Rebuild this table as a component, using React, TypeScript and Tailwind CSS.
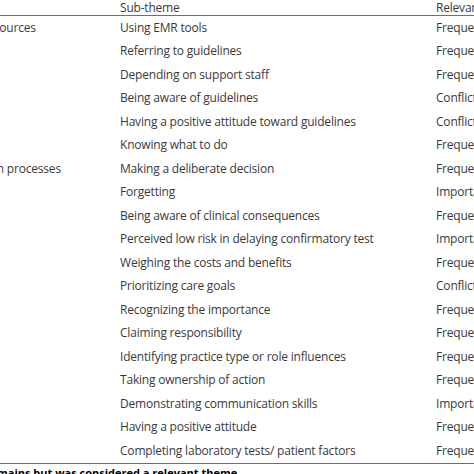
const rows: [string, string, string][] = [
  ["Resources", "Using EMR tools", "Frequent"],
  ["", "Referring to guidelines", "Frequent"],
  ["", "Depending on support staff", "Frequent"],
  ["", "Being aware of guidelines", "Conflicting"],
  ["", "Having a positive attitude toward guidelines", "Conflicting"],
  ["", "Knowing what to do", "Frequent"],
  ["Decision processes", "Making a deliberate decision", "Frequent"],
  ["", "Forgetting", "Important"],
  ["", "Being aware of clinical consequences", "Frequent"],
  ["", "Perceived low risk in delaying confirmatory test", "Important"],
  ["", "Weighing the costs and benefits", "Frequent"],
  ["", "Prioritizing care goals", "Conflicting"],
  ["", "Recognizing the importance", "Frequent"],
  ["", "Claiming responsibility", "Frequent"],
  ["", "Identifying practice type or role influences", "Frequent"],
  ["", "Taking ownership of action", "Frequent"],
  ["", "Demonstrating communication skills", "Important"],
  ["", "Having a positive attitude", "Frequent"],
  ["", "Completing laboratory tests/ patient factors", "Frequent"],
];

export default function App() {
  return (
    <div
      className="w-[474px] h-[474px] overflow-hidden bg-white text-[#3a3a3a] text-[12px] tracking-[-0.2px]"
      style={{ fontFamily: '"Open Sans", "Noto Sans", sans-serif' }}
    >
      <div className="flex h-[16px] items-center border-b border-[#6f6f6f] leading-none">
        <div className="w-[120px] shrink-0" />
        <div className="w-[316px] shrink-0 whitespace-nowrap">Sub-theme</div>
        <div className="whitespace-nowrap">Relevance</div>
      </div>
      {rows.map(([theme, sub, rel], i) => (
        <div key={i} className="flex h-[23.5px] items-center whitespace-nowrap">
          <div className="w-[120px] shrink-0 overflow-hidden">
            {theme === "Resources" && <span className="ml-[-20px] block">{theme}</span>}
            {theme === "Decision processes" && <span className="ml-[-42px] block">{theme}</span>}
          </div>
          <div className="w-[316px] shrink-0">{sub}</div>
          <div>{rel}</div>
        </div>
      ))}
      <div className="border-t border-[#6f6f6f] pt-[2px] ml-[-3px] whitespace-nowrap text-[11px] font-bold text-black leading-[14px] tracking-normal">
        mains but was considered a relevant theme
      </div>
    </div>
  );
}
